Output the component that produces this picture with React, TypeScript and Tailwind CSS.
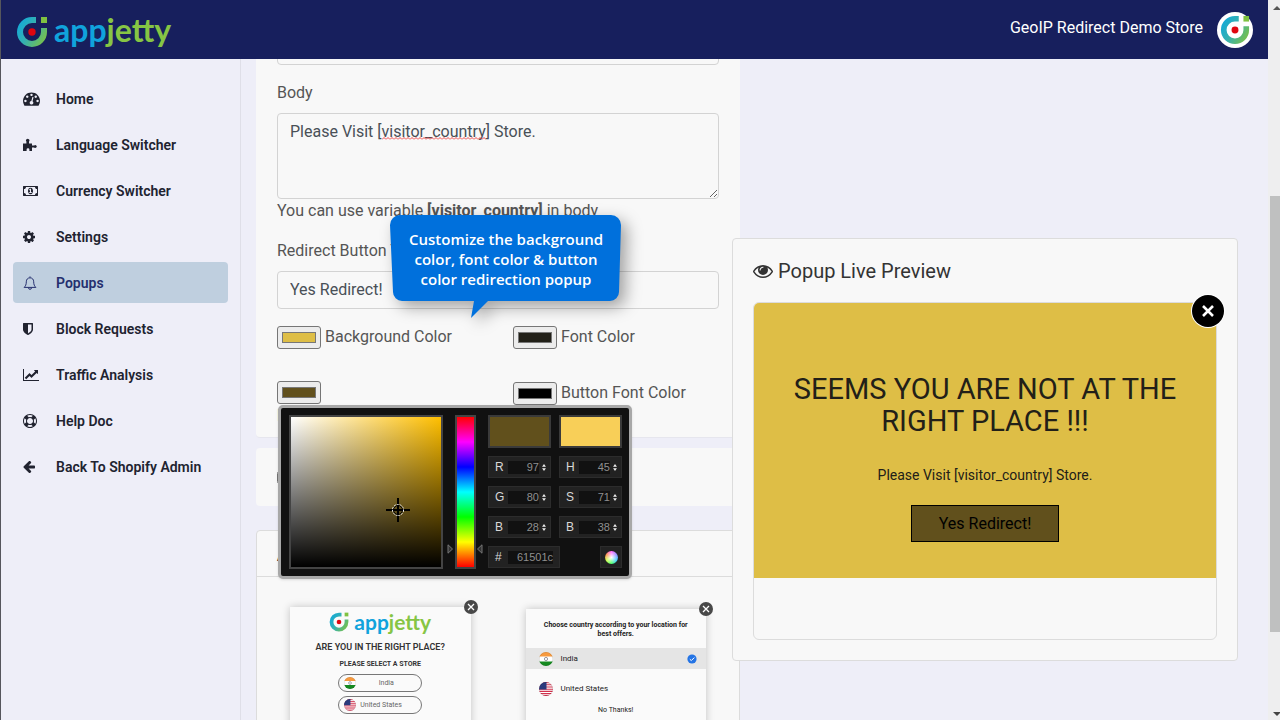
import React, { useState } from "react";

type IconProps = { className?: string };

const glyphs = {
  dashboard: {
    box: "0 128 1792 1536",
    d: "M384 1152q0-53-37.5-90.5t-90.5-37.5-90.5 37.5-37.5 90.5 37.5 90.5 90.5 37.5 90.5-37.5 37.5-90.5zm192-448q0-53-37.5-90.5t-90.5-37.5-90.5 37.5-37.5 90.5 37.5 90.5 90.5 37.5 90.5-37.5 37.5-90.5zm428 481l101-382q6-26-7.5-48.5t-38.5-29.5-48 6.5-30 39.5l-101 382q-60 5-107 43.5t-63 98.5q-20 77 20 146t117 89 146-20 89-117q16-60-6-117t-72-91zm660-33q0-53-37.5-90.5t-90.5-37.5-90.5 37.5-37.5 90.5 37.5 90.5 90.5 37.5 90.5-37.5 37.5-90.5zm-640-640q0-53-37.5-90.5t-90.5-37.5-90.5 37.5-37.5 90.5 37.5 90.5 90.5 37.5 90.5-37.5 37.5-90.5zm448 192q0-53-37.5-90.5t-90.5-37.5-90.5 37.5-37.5 90.5 37.5 90.5 90.5 37.5 90.5-37.5 37.5-90.5zm320 448q0 261-141 483-19 29-54 29h-1402q-35 0-54-29-141-221-141-483 0-182 71-348t191-286 286-191 348-71 348 71 286 191 191 286 71 348z",
  },
  puzzle: {
    box: "0 0 14 14",
    d: "M0 5.500h3.400V3.600A1.700 1.700 0 1 1 6 3.600V5.500h3v2.100h2.200a1.400 1.400 0 1 1 0 1.800H9V13H6.400v-1.400a1.400 1.400 0 0 0-2.800 0V13H0z",
  },
  money: {
    box: "0 256 1920 1280",
    d: "M768 1152h384v-96h-128v-448h-114l-148 137 77 80q42-37 55-57h2v288h-128v96zm512-256q0 70-21 142t-59.5 134-101.5 101-138 39-138-39-101.5-101-59.5-134-21-142 21-142 59.5-134 101.5-101 138-39 138 39 101.5 101 59.5 134 21 142zm512 256v-512q-106 0-181-75t-75-181h-1152q0 106-75 181t-181 75v512q106 0 181 75t75 181h1152q0-106 75-181t181-75zm128-832v1152q0 26-19 45t-45 19h-1792q-26 0-45-19t-19-45v-1152q0-26 19-45t45-19h1792q26 0 45 19t19 45z",
  },
  cog: {
    box: "128 128 1536 1536",
    d: "M1152 896q0-106-75-181t-181-75-181 75-75 181 75 181 181 75 181-75 75-181zm512-109v222q0 12-8 23t-20 13l-185 28q-19 54-39 91 35 50 107 138 10 12 10 25t-9 23q-27 37-99 108t-94 71q-12 0-26-9l-138-108q-44 23-91 38-16 136-29 186-7 28-36 28h-222q-14 0-24.5-8.5t-11.5-21.5l-28-184q-49-16-90-37l-141 107q-10 9-25 9-14 0-25-11-126-114-165-168-7-10-7-23 0-12 8-23 15-21 51-66.5t54-70.5q-27-50-41-99l-183-27q-13-2-21-12.5t-8-23.5v-222q0-12 8-23t19-13l186-28q14-46 39-92-40-57-107-138-10-12-10-24 0-10 9-23 26-36 98.5-107.5t94.5-71.5q13 0 26 10l138 107q44-23 91-38 16-136 29-186 7-28 36-28h222q14 0 24.5 8.5t11.5 21.5l28 184q49 16 90 37l142-107q9-9 24-9 13 0 25 10 129 119 165 170 7 8 7 22 0 12-8 23-15 21-51 66.5t-54 70.5q26 50 41 98l183 28q13 2 21 12.5t8 23.5z",
  },
  shield: {
    box: "256 128 1280 1536",
    d: "M1344 960v-640h-448v1137q119-63 213-137 235-184 235-360zm192-768v768q0 86-33.5 170.5t-83 150-118 127.5-126.5 103-121 77.5-89.5 49.5-42.5 20q-12 6-26 6t-26-6q-16-7-42.5-20t-89.5-49.5-121-77.5-126.5-103-118-127.5-83-150-33.5-170.5v-768q0-26 19-45t45-19h1152q26 0 45 19t19 45z",
  },
  chart: {
    box: "0 128 2048 1536",
    d: "M2048 1536v128h-2048v-1536h128v1408h1920zm-128-1248v435q0 21-19.5 29.5t-35.5-7.5l-121-121-633 633q-10 10-23 10t-23-10l-233-233-416 416-192-192 585-585q10-10 23-10t23 10l233 233 464-464-121-121q-16-16-7.5-35.5t29.5-19.5h435q14 0 23 9t9 23z",
  },
  ring: {
    box: "0 0 1792 1792",
    d: "M896 0q182 0 348 71t286 191 191 286 71 348-71 348-191 286-286 191-348 71-348-71-286-191-191-286-71-348 71-348 191-286 286-191 348-71zm0 128q-190 0-361 90l194 194q82-28 167-28t167 28l194-194q-171-90-361-90zm-678 1129l194-194q-28-82-28-167t28-167l-194-194q-90 171-90 361t90 361zm678 407q190 0 361-90l-194-194q-82 28-167 28t-167-28l-194 194q171 90 361 90zm0-384q159 0 271.5-112.5t112.5-271.5-112.5-271.5-271.5-112.5-271.5 112.5-112.5 271.5 112.5 271.5 271.5 112.5zm484-217l194 194q90-171 90-361t-90-361l-194 194q28 82 28 167t-28 167z",
  },
  arrow: {
    box: "128 200 1536 1536",
    d: "M1664 896v128q0 53-32.5 90.5t-84.5 37.5h-704l293 294q38 36 38 90t-38 90l-75 76q-37 37-90 37-52 0-91-37l-651-652q-37-37-37-90 0-52 37-91l651-650q38-38 91-38 52 0 90 38l75 74q38 38 38 91t-38 91l-293 293h704q52 0 84.5 37.5t32.5 90.5z",
  },
  eye: {
    box: "0 384 1792 1152",
    d: "M1664 960q-152-236-381-353 61 104 61 225 0 185-131.5 316.5t-316.5 131.5-316.5-131.5-131.5-316.5q0-121 61-225-229 117-381 353 133 205 333.5 326.5t434.5 121.5 434.5-121.5 333.5-326.5zm-720-384q0-20-14-34t-34-14q-125 0-214.5 89.5t-89.5 214.5q0 20 14 34t34 14 34-14 14-34q0-86 61-147t147-61q20 0 34-14t14-34zm848 384q0 34-20 69-140 230-376.5 368.5t-499.5 138.5-499.5-139-376.5-368q-20-35-20-69t20-69q140-229 376.5-368t499.5-139 499.5 139 376.5 368q20 35 20 69z",
  },
};

function Glyph({ name, className }: { name: keyof typeof glyphs; className?: string }) {
  return (
    <svg viewBox={glyphs[name].box} className={className} fill="currentColor" aria-hidden="true">
      <path d={glyphs[name].d} />
    </svg>
  );
}

function BellIcon({ className }: IconProps) {
  return (
    <svg viewBox="0 0 14 14" className={className} fill="none" stroke="currentColor" strokeWidth="1" aria-hidden="true">
      <path d="M7 .4v1.1M1.1 11.4h11.8c-1.4-1.3-2.2-2.7-2.2-5.6 0-2.4-1.5-4-3.700-4s-3.700 1.600-3.700 4c0 2.900-.8 4.300-2.200 5.600z" />
      <path d="M5.500 11.800a1.500 1.500 0 0 0 3 0" />
    </svg>
  );
}

const links: { label: string; icon: React.ReactNode; active?: boolean }[] = [
  { label: "Home", icon: <Glyph name="dashboard" className="h-[15px] w-[17px]" /> },
  { label: "Language Switcher", icon: <Glyph name="puzzle" className="h-[14px] w-[14px]" /> },
  { label: "Currency Switcher", icon: <Glyph name="money" className="h-[10px] w-[15px]" /> },
  { label: "Settings", icon: <Glyph name="cog" className="h-3 w-3" /> },
  { label: "Popups", icon: <BellIcon className="h-[14px] w-[14px]" />, active: true },
  { label: "Block Requests", icon: <Glyph name="shield" className="h-3 w-[10px]" /> },
  { label: "Traffic Analysis", icon: <Glyph name="chart" className="h-3 w-4" /> },
  { label: "Help Doc", icon: <Glyph name="ring" className="h-[14px] w-[14px]" /> },
  { label: "Back To Shopify Admin", icon: <Glyph name="arrow" className="h-3 w-3" /> },
];

function LogoMark({ id, className }: { id: string; className?: string }) {
  return (
    <svg viewBox="0 0 32 32" className={className} aria-hidden="true">
      <defs>
        <linearGradient id={id} x1="0" y1="0.2" x2="1" y2="0.8">
          <stop offset="0" stopColor="#10a9dc" />
          <stop offset="0.45" stopColor="#35b1b0" />
          <stop offset="1" stopColor="#7fc241" />
        </linearGradient>
      </defs>
      <path d="M20 1H16a15 15 0 1 0 15 15V12H25V16a9 9 0 1 1-9-9H20z" fill={`url(#${id})`} />
      <path d="M25 1H31V7H25z" fill="#7fc241" />
      <circle cx="16" cy="16" r="3.700" fill="#e0060f" />
    </svg>
  );
}

function Flag({ country, className }: { country: "in" | "us"; className?: string }) {
  const id = `flag-${country}`;
  return (
    <svg viewBox="0 0 14 14" className={className} aria-hidden="true">
      <clipPath id={id}>
        <circle cx="7" cy="7" r="7" />
      </clipPath>
      <g clipPath={`url(#${id})`}>
        <path fill="#fff" d="M0 0h14v14H0z" />
        {country === "in" ? (
          <>
            <path fill="#f79a3e" d="M0 0h14v4.600H0z" />
            <path fill="#158a20" d="M0 9.400h14V14H0z" />
            <circle cx="7" cy="7" r="1.600" fill="none" stroke="#556" strokeWidth=".6" />
          </>
        ) : (
          <>
            <path stroke="#d2304c" strokeWidth="1.100" d="M0 .6h14M0 2.800h14M0 5h14M0 7.200h14M0 9.400h14M0 11.600h14M0 13.600h14" />
            <path fill="#2a3a7c" d="M0 0h7.500v7.400H0z" />
          </>
        )}
      </g>
      <circle cx="7" cy="7" r="6.700" fill="none" stroke="#0003" strokeWidth=".5" />
    </svg>
  );
}

function CloseDot() {
  return (
    <button aria-label="Close" className="absolute -top-[7px] -right-[7px] flex h-[14px] w-[14px] items-center justify-center rounded-full bg-[#484848]">
      <svg viewBox="0 0 8 8" className="h-2 w-2" stroke="#fff" strokeWidth="1.300" aria-hidden="true">
        <path d="M1 1l6 6M7 1L1 7" />
      </svg>
    </button>
  );
}

function ColorField({ id, label, value }: { id: string; label: string; value: string }) {
  const [color, setColor] = useState(value);
  return (
    <div className="flex flex-wrap content-start items-center gap-x-1">
      <input
        id={id}
        type="color"
        value={color}
        onChange={(e) => setColor(e.target.value)}
        className="h-[23px] w-11 rounded-[3px] border border-[#767676] bg-[#ececec] px-[2px] py-px"
      />
      <label htmlFor={id}>{label}</label>
    </div>
  );
}

function PickerField({ label, value }: { label: string; value: string }) {
  return (
    <label className="flex h-[22px] items-center border border-[#2c2c2c] bg-[#222] pr-1 pl-[6px] text-[12px] text-[#d8d8d8]">
      <span className="w-[13px] shrink-0">{label}</span>
      <input defaultValue={value} className="h-[13px] w-full min-w-0 bg-[#111] text-right text-[11px] leading-3 text-[#8f8f8f]" />
      <svg viewBox="0 0 5 9" className="ml-[3px] h-[7px] w-1 shrink-0" fill="#eee" aria-hidden="true">
        <path d="M0 3.500L2.500 0 5 3.500zM0 5.500L2.500 9 5 5.500z" />
      </svg>
    </label>
  );
}

function ColorPicker() {
  return (
    <div className="absolute top-6 left-px z-20 flex w-[354px] rounded-[5px] border-[3px] border-[#a8a8a8] bg-[#111] px-2 py-[7px] font-['Liberation_Sans',sans-serif] shadow">
      <div className="relative h-[154px] w-[154px] shrink-0 border-2 border-[#444] bg-[linear-gradient(to_top,#000,transparent),linear-gradient(to_right,#fff,#ffbf00)]">
        <svg viewBox="0 0 24 24" className="absolute top-[81px] left-[95px] h-6 w-6" fill="none" aria-hidden="true">
          <path d="M12 0v24M0 12h24" stroke="#000" strokeWidth="2" />
          <circle cx="12" cy="12" r="5.500" stroke="#fff" strokeDasharray="2 1" />
          <circle cx="12" cy="12" r="4.500" stroke="#000" strokeWidth="1" />
        </svg>
      </div>
      <div className="relative ml-3 h-[154px] w-[21px] shrink-0 border-2 border-[#444] bg-[linear-gradient(to_top,#f00,#ff0,#0f0,#0ff,#00f,#f0f,#f00)]">
        <svg viewBox="0 0 36 10" className="absolute -left-[10px] bottom-[13px] h-[10px] w-[36px] max-w-none" fill="#333" stroke="#777" strokeWidth="1" aria-hidden="true">
          <path d="M1 .8L5.500 5 1 9.200zM35 .8L30.500 5 35 9.200z" />
        </svg>
      </div>
      <div className="ml-3 grid w-[134px] shrink-0 grid-cols-2 content-start gap-2">
        <span className="h-[33px] border-2 border-[#3a3a3a] bg-[#61501c]" />
        <span className="h-[33px] border-2 border-[#3a3a3a] bg-[#f8cf58]" />
        <PickerField label="R" value="97" />
        <PickerField label="H" value="45" />
        <PickerField label="G" value="80" />
        <PickerField label="S" value="71" />
        <PickerField label="B" value="28" />
        <PickerField label="B" value="38" />
        <div className="col-span-2 flex justify-between">
          <label className="flex h-[22px] w-[72px] items-center border border-[#2c2c2c] bg-[#222] px-[6px] text-[12px] text-[#d8d8d8]">
            <span className="w-[13px] shrink-0">#</span>
            <input defaultValue="61501c" className="h-[13px] w-full min-w-0 bg-[#111] text-right text-[11px] leading-3 text-[#8f8f8f]" />
          </label>
          <button aria-label="Apply colour" className="flex h-[22px] w-[22px] items-center justify-center border border-[#2c2c2c] bg-[#222]">
            <span className="h-[13px] w-[13px] rounded-full bg-[radial-gradient(#fff,transparent_70%),conic-gradient(#f6f,#88f,#3cf,#4f6,#cf4,#f84,#f6f)]" />
          </button>
        </div>
      </div>
    </div>
  );
}

function Callout() {
  return (
    <div className="absolute top-[156px] left-[134px] z-30 w-[232px]">
      <svg viewBox="0 0 232 104" className="absolute top-0 left-0 h-[104px] w-full overflow-visible drop-shadow-[6px_6px_8px_rgba(0,0,0,0.35)]" fill="#0070dc" aria-hidden="true">
        <path d="M10 0H221a10 10 0 0 1 10 10L229 77a9 9 0 0 1-9 9H98L81 103 84 86H12a9 9 0 0 1-9-9L0 10A10 10 0 0 1 10 0z" />
      </svg>
      <p className="relative px-3 pt-[14px] text-center font-['Open_Sans',sans-serif] text-[15px] leading-5 font-semibold text-white">
        Customize the background color, font color &amp; button color redirection popup
      </p>
    </div>
  );
}

function SettingsForm() {
  return (
    <section className="relative flow-root h-[379px] rounded-b border-b border-[#e6e6ee] bg-[#f8f8f8] px-[21px]">
      <input aria-label="Title" className="-mt-8 block h-[38px] w-full rounded border border-[#d3d3d3] px-3" />
      <label htmlFor="body" className="mt-4 mb-2 block">Body</label>
      <div className="relative">
        <textarea
          id="body"
          spellCheck={false}
          defaultValue="Please Visit [visitor_country] Store."
          className="block h-[86px] w-full rounded border border-[#d3d3d3] px-3 py-[6px] leading-6 text-[#495057]"
        />
        <svg className="absolute top-6 left-[105px] h-[3px] w-[104px]" aria-hidden="true">
          <defs>
            <pattern id="squiggle" width="4" height="3" patternUnits="userSpaceOnUse">
              <path d="M0 2.500L2 .5 4 2.500" fill="none" stroke="#e33" strokeWidth=".9" />
            </pattern>
          </defs>
          <rect width="104" height="3" fill="url(#squiggle)" />
        </svg>
      </div>
      <p>
        You can use variable <strong className="font-bold">[visitor_country]</strong> in body
      </p>
      <label htmlFor="redirect" className="mt-4 mb-2 block">Redirect Button Text</label>
      <input
        id="redirect"
        defaultValue="Yes Redirect!"
        className="block h-[38px] w-full rounded border border-[#d3d3d3] px-3 pb-px text-[#495057]"
      />
      <div className="mt-4 grid grid-cols-2 gap-x-[30px] gap-y-8">
        <ColorField id="bg" label="Background Color" value="#debe46" />
        <ColorField id="font" label="Font Color" value="#222018" />
        <div className="relative">
          <ColorField id="btn" label="Button Background Color" value="#61501c" />
          <ColorPicker />
        </div>
        <ColorField id="btnfont" label="Button Font Color" value="#000000" />
      </div>
      <Callout />
    </section>
  );
}

function StoreThumb() {
  return (
    <div className="relative flex h-[140px] flex-col items-center bg-[#fafafa] shadow-[0_0_8px_rgba(0,0,0,0.22)]">
      <CloseDot />
      <div className="mt-1 flex items-center gap-[5px]">
        <LogoMark id="mark-small" className="h-5 w-5" />
        <span className="font-['Lato',sans-serif] text-[21px] leading-[22px] font-bold text-[#10a3dc]">
          app<span className="text-[#86c544]">jetty</span>
        </span>
      </div>
      <p className="mt-2 text-[9px] leading-3 font-semibold text-[#333]">ARE YOU IN THE RIGHT PLACE?</p>
      <p className="mt-[5px] text-[7px] leading-3 font-bold text-[#333]">PLEASE SELECT A STORE</p>
      <div className="mt-1 flex w-[84px] flex-col gap-1 text-[7px] text-[#666]">
        <button className="flex h-[18px] items-center rounded-full border border-[#777] px-[5px]">
          <Flag country="in" className="h-3 w-3" />
          <span className="flex-1 text-center">India</span>
        </button>
        <button className="flex h-[18px] items-center rounded-full border border-[#777] px-[5px]">
          <Flag country="us" className="h-3 w-3" />
          <span className="ml-1">United States</span>
        </button>
      </div>
    </div>
  );
}

function CountryThumb() {
  return (
    <div className="relative mt-[2px] h-[140px] bg-[#fafafa] text-[#222] shadow-[0_0_8px_rgba(0,0,0,0.22)]">
      <CloseDot />
      <p className="px-3 pt-3 text-center text-[7px] leading-[9px] font-bold">
        Choose country according to your location for best offers.
      </p>
      <div className="mt-[9px] flex h-[21px] items-center bg-[#e5e5e5] pr-[9px] pl-[13px] text-[8px]">
        <Flag country="in" className="h-[14px] w-[14px]" />
        <span className="ml-2 flex-1">India</span>
        <svg viewBox="0 0 10 10" className="h-[10px] w-[10px]" aria-hidden="true">
          <circle cx="5" cy="5" r="4.600" fill="#2474e5" />
          <path d="M2.800 5.200l1.500 1.400 3-3" stroke="#fff" fill="none" />
        </svg>
      </div>
      <div className="mt-[9px] flex h-[21px] items-center pl-[13px] text-[8px]">
        <Flag country="us" className="h-[14px] w-[14px]" />
        <span className="ml-2">United States</span>
      </div>
      <p className="mt-[5px] text-center text-[7px] leading-3">No Thanks!</p>
    </div>
  );
}

function LivePreview() {
  return (
    <aside className="rounded border border-[#dcdcdc] bg-[#f8f8f8] p-5">
      <h2 className="flex items-center gap-[5px] text-[20px] leading-6 text-[#333]">
        <Glyph name="eye" className="h-[13px] w-5" />
        Popup Live Preview
      </h2>
      <div className="relative mt-[19px] rounded-md border border-[#dcdcdc] pb-[61px]">
        <button aria-label="Close popup" className="absolute -top-2 -right-2 flex h-8 w-8 items-center justify-center rounded-full bg-black shadow-[0_0_0_1px_#fff]">
          <svg viewBox="0 0 12 12" className="h-3 w-3" stroke="#fff" strokeWidth="2.600" aria-hidden="true">
            <path d="M1 1l10 10M11 1L1 11" />
          </svg>
        </button>
        <div className="flex h-[275px] flex-col items-center rounded-t-[5px] bg-[#debe46] px-8 pt-[70px] text-center">
          <h3 className="text-[29px] leading-8 text-[#222018]">SEEMS YOU ARE NOT AT THE RIGHT PLACE !!!</h3>
          <p className="mt-7 text-[14px] leading-5 text-[#222018]">Please Visit [visitor_country] Store.</p>
          <button className="mt-5 h-[37px] border border-black bg-[#61501c] px-[27px] text-black">Yes Redirect!</button>
        </div>
      </div>
    </aside>
  );
}

export default function App() {
  return (
    <div className="flex h-screen overflow-hidden border-l border-[#55565c] bg-[#eeeef8] font-['Roboto',sans-serif] text-[16px] leading-6 text-[#555]">
      <div className="flex min-w-0 flex-1 flex-col">
        <header className="z-40 flex h-[59px] shrink-0 items-center justify-between bg-[#171f5d] px-[15px]">
          <a href="#home" className="flex items-center gap-[6px]">
            <LogoMark id="mark-main" className="mt-1 h-8 w-8" />
            <span className="font-['Lato',sans-serif] text-[32px] leading-8 font-bold text-[#10a3dc]">
              app<span className="text-[#86c544]">jetty</span>
            </span>
          </a>
          <div className="flex items-center gap-[14px] text-white">
            <span className="pb-1">GeoIP Redirect Demo Store</span>
            <span className="flex h-9 w-9 items-center justify-center rounded-full bg-white">
              <LogoMark id="mark-avatar" className="h-[30px] w-[30px]" />
            </span>
          </div>
        </header>
        <div className="flex min-h-0 flex-1">
          <nav className="w-60 shrink-0 border-r border-[#dfdfe8] px-3 pt-[19px]">
            <ul className="flex flex-col gap-[5px]">
              {links.map((l) => (
                <li key={l.label}>
                  <a
                    href="#nav"
                    className={
                      l.active
                        ? "flex h-[41px] items-center rounded bg-[#bfcfdf] pl-[10px] text-[14px] font-semibold text-[#252f6e]"
                        : "flex h-[41px] items-center rounded pl-[10px] text-[14px] font-semibold text-[#212330]"
                    }
                  >
                    <span className="flex w-[33px] shrink-0">{l.icon}</span>
                    {l.label}
                  </a>
                </li>
              ))}
            </ul>
          </nav>
          <main className="flex min-w-0 flex-1 overflow-hidden pl-[15px]">
            <div className="min-w-0 flex-[484]">
              <SettingsForm />
              <section className="mt-[10px] flex h-[58px] items-center rounded bg-[#f8f8f8] px-[21px]">
                <label className="flex items-center gap-2">
                  <input type="checkbox" className="h-[13px] w-[13px]" />
                  Enable redirect popup
                </label>
              </section>
              <section className="mt-6 rounded-t border border-[#dcdcdc] bg-[#f8f8f8]">
                <h2 className="flex h-[46px] items-center border-b border-[#dcdcdc] px-5 pt-1 font-bold text-[#333]">Available Templates</h2>
                <div className="grid grid-cols-2 gap-x-[55px] px-[33px] pt-[30px]">
                  <StoreThumb />
                  <CountryThumb />
                </div>
              </section>
            </div>
            <div className="z-10 mt-[179px] mr-[30px] -ml-2 min-w-0 flex-[506]">
              <LivePreview />
            </div>
          </main>
        </div>
      </div>
      <div className="flex w-3 shrink-0 flex-col items-end bg-[#eeeeef]" aria-hidden="true">
        <svg viewBox="0 0 10 14" className="h-[14px] w-[10px]" fill="#555">
          <path d="M3 10l4-4 3 3v1z" />
        </svg>
        <div className="mt-[182px] min-h-0 w-[10px] flex-[436] bg-[#bfc0c0]" />
        <div className="flex-[74]" />
        <svg viewBox="0 0 10 14" className="h-[14px] w-[10px]" fill="#444">
          <path d="M3 6l4 4 3-3V6z" />
        </svg>
      </div>
    </div>
  );
}
